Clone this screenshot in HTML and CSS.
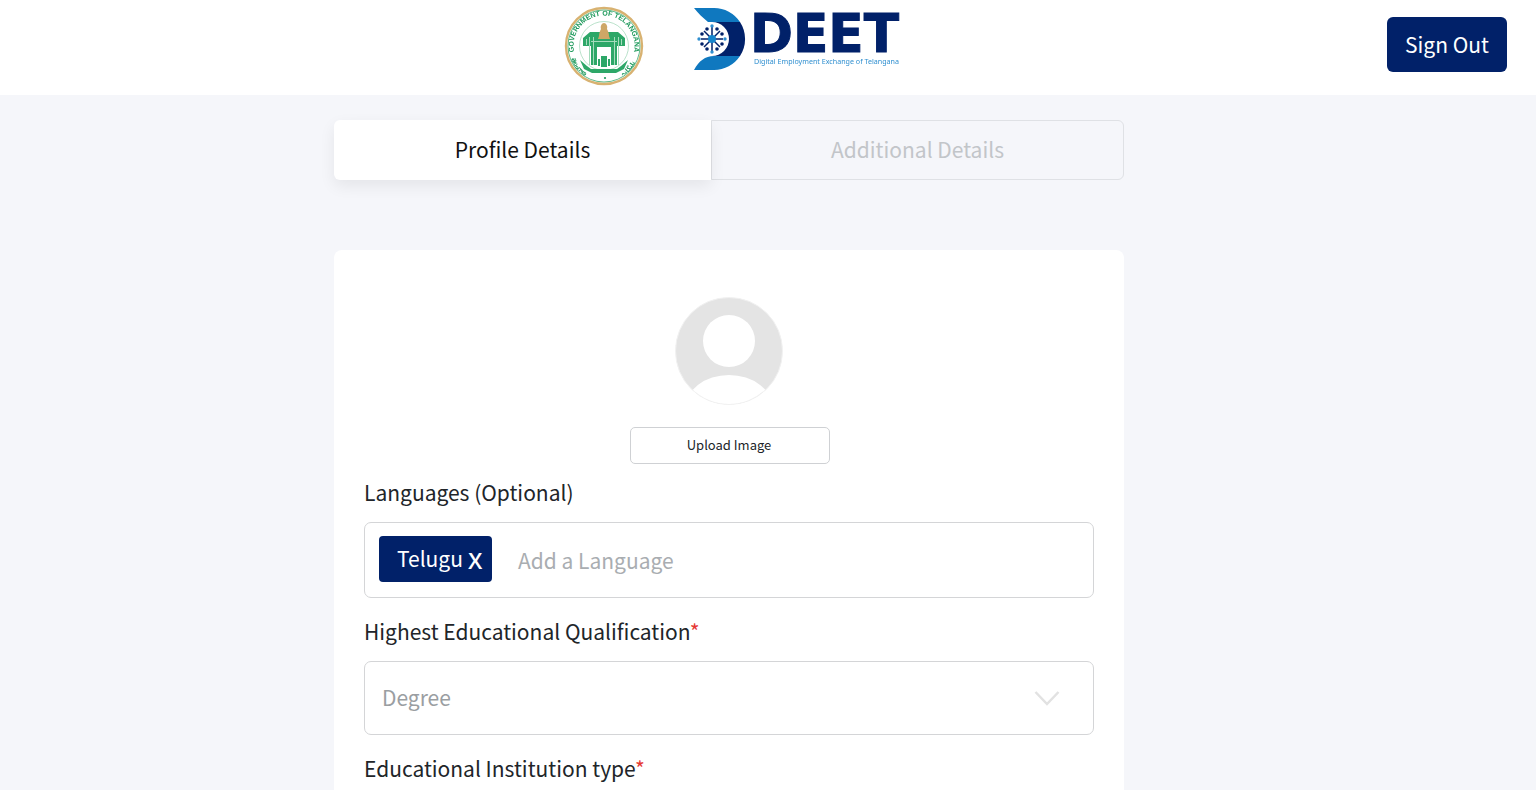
FILE: index.html
```html
<!DOCTYPE html>
<html lang="en">
<head>
<meta charset="utf-8">
<title>DEET Profile</title>
<link rel="stylesheet" href="styles.css">
</head>
<body>
<header class="topbar">
  <svg class="emblem" viewBox="0 0 80 80" width="80" height="80" role="img" aria-label="Government of Telangana emblem">
    <defs>
      <path id="arcTop" d="M40 70.500a30.500 30.500 0 0 1 0-61a30.500 30.500 0 0 1 0 61"/>
      <path id="arcBot" d="M40 4.500a35.500 35.500 0 0 0 0 71a35.500 35.500 0 0 0 0-71"/>
    </defs>
    <circle cx="40" cy="40" r="38" fill="#fff" stroke="#d8b271" stroke-width="2.400"/>
    <circle cx="40" cy="40" r="36" fill="none" stroke="#39a86c" stroke-width=".8"/>
    <text class="emblem-text"><textPath href="#arcTop" startOffset="50%" text-anchor="middle">GOVERNMENT OF TELANGANA</textPath></text>
    <text class="emblem-small"><textPath href="#arcBot" startOffset="36%" text-anchor="middle">తెలంగాణ</textPath></text>
    <text class="emblem-small"><textPath href="#arcBot" startOffset="63%" text-anchor="middle">تلنگانہ</textPath></text>
    <circle cx="40" cy="40" r="24.500" fill="#fff" stroke="#8ccfa8" stroke-width=".6"/>
    <path fill="#2da768" d="M19 32l7-6h28l7 6v8H53v19H27V40H19z"/>
    <path fill="#a5dcbc" d="M22 33h1v6h-1zM25 31h1v28h-1zM29 31h1v28h-1zM50 31h1v28h-1zM54 31h1v28h-1zM57 33h1v6h-1zM27 35h26v1H27z"/>
    <rect x="33" y="39" width="14" height="20" fill="#fff"/>
    <path fill="#2da768" d="M33 39h14v2H33zM37 50h6v11h-6zM34 53h2v7h-2zM44 53h2v7h-2z"/>
    <path fill="#cda766" d="M35 30c0-3 1-5 2-7-1-3 1-6 3-6s4 3 3 6c1 2 2 4 2 7l1 3H34z"/>
    <path fill="#2da768" d="M16 54l7 6 4 3h26l4-3 7-6-4 9-8 4H28l-8-4z"/>
    <circle cx="41" cy="72" r="1.100" fill="#1f9a5c"/>
  </svg>
  <svg class="logo" viewBox="0 0 215 72" width="215" height="72" role="img" aria-label="DEET">
    <g transform="translate(0 8)">
      <path fill="#0f78bf" d="M0 0H20A31 31 0 0 1 46 14H14C9 10 4 5 0 0Z"/>
      <path fill="#012169" d="M18 14H46A31 31 0 0 1 46 48H18A17 17 0 0 0 18 14Z"/>
      <path fill="#0f78bf" d="M0 62H20A31 31 0 0 0 46 48H20C11 48 5 53 0 62Z"/>
      <g class="flake"><path d="M18 19V43M7 31H29M10 23l16 16M26 23L10 39"/></g>
      <g fill="#012169">
        <circle cx="13" cy="21" r="1.800"/><circle cx="23" cy="21" r="1.800"/><circle cx="13" cy="41" r="1.800"/><circle cx="23" cy="41" r="1.800"/>
        <circle cx="8" cy="26" r="1.800"/><circle cx="28" cy="26" r="1.800"/><circle cx="8" cy="36" r="1.800"/><circle cx="28" cy="36" r="1.800"/>
      </g>
      <g fill="#2f8fd0"><circle cx="18" cy="18" r="1.700"/><circle cx="18" cy="44" r="1.700"/><circle cx="5" cy="31" r="1.700"/><circle cx="31" cy="31" r="1.700"/></g>
      <circle cx="18" cy="31" r="4" fill="#1585cc"/>
    </g>
    <text class="logo-word" x="56" y="52" textLength="149" lengthAdjust="spacingAndGlyphs">DEET</text>
    <text class="logo-tag" x="60" y="64" textLength="145" lengthAdjust="spacingAndGlyphs">Digital Employment Exchange of Telangana</text>
  </svg>
  <button class="signout" type="button">Sign Out</button>
</header>

<main class="page">
  <nav class="tabs">
    <div class="tab tab-active">Profile Details</div>
    <div class="tab tab-idle">Additional Details</div>
  </nav>

  <section class="card">
    <div class="avatar-block">
      <svg class="avatar" viewBox="0 0 108 108" width="108" height="108" role="img" aria-label="Profile placeholder">
        <defs><clipPath id="avatarClip"><circle cx="54" cy="54" r="53"/></clipPath></defs>
        <circle cx="54" cy="54" r="53.500" fill="#e4e4e4" stroke="#f1f1f1"/>
        <g clip-path="url(#avatarClip)">
          <circle cx="54" cy="44" r="26" fill="#fff"/>
          <ellipse cx="54" cy="112" rx="44" ry="34" fill="#fff"/>
        </g>
      </svg>
      <button class="upload" type="button">Upload Image</button>
    </div>

    <label class="field-label">Languages (Optional)</label>
    <div class="tag-input">
      <span class="chip">Telugu <span class="chip-x">x</span></span>
      <span class="placeholder">Add a Language</span>
    </div>

    <label class="field-label field-gap">Highest Educational Qualification<span class="req">*</span></label>
    <div class="select">
      <span class="select-value">Degree</span>
      <svg class="chevron" viewBox="0 0 26 16" width="26" height="16" aria-hidden="true"><path d="M1.500 2L13 14 24.500 2"/></svg>
    </div>

    <label class="field-label field-gap">Educational Institution type<span class="req">*</span></label>
  </section>
</main>
</body>
</html>
```
FILE: styles.css
```css
* { box-sizing: border-box; }
html, body { height: 790px; overflow: hidden; }
body {
  margin: 0;
  background: #f5f6fa;
  color: #212529;
  font-family: "Noto Sans CJK SC", "Noto Sans CJK JP", "Noto Sans", sans-serif;
  font-size: 21px;
}
button { font-family: inherit; cursor: pointer; }

.topbar {
  height: 95px;
  background: #fff;
  display: flex;
  align-items: flex-start;
  padding-left: 564px;
  padding-right: 29px;
}
.emblem { margin-top: 6px; flex: none; filter: blur(.45px); }
.logo { margin: 0 0 0 50px; flex: none; filter: blur(.35px); }
.emblem-text { font: 700 7px "Liberation Sans", sans-serif; fill: #1f9a5c; }
.emblem-small { font: 700 6px "DejaVu Sans", sans-serif; fill: #1f9a5c; }
.flake { fill: none; stroke: #012169; stroke-width: 1.500; }
.logo-word { font: 700 54px "DejaVu Sans", sans-serif; fill: #012169; stroke: #012169; stroke-width: 1px; }
.logo-tag { font: 400 7px "Noto Sans", sans-serif; fill: #2f8fd0; }
.signout {
  margin: 17px 0 0 auto;
  width: 120px;
  height: 55px;
  border: 0;
  border-radius: 6px;
  background: #012169;
  color: #fff;
  font-size: 21px;
  padding: 0;
  line-height: 55px;
}

.page {
  width: 790px;
  margin-left: 334px;
  padding-top: 25px;
}
.tabs { display: flex; height: 60px; }
.tab {
  display: flex;
  align-items: center;
  justify-content: center;
  padding-bottom: 2px;
  line-height: 34px;
}
.tab-active {
  width: 377px;
  background: #fff;
  color: #111;
  border-radius: 6px 0 0 6px;
  box-shadow: 0 6px 16px rgba(0, 0, 0, .07);
  position: relative;
}
.tab-idle {
  flex: 1;
  color: #c2c5c9;
  background: #f5f6fa;
  border: 1px solid #dfe1e5;
  border-radius: 0 6px 6px 0;
}

.card {
  margin-top: 70px;
  background: #fff;
  border-radius: 8px 8px 0 0;
  padding: 47px 30px 0;
  height: 600px;
}
.avatar-block { display: flex; flex-direction: column; align-items: center; }
.avatar { display: block; }
.upload {
  margin: 22px 0 0 2px;
  width: 200px;
  height: 37px;
  padding: 0 2px 2px 0;
  background: #fff;
  border: 1px solid #cfd1d4;
  border-radius: 5px;
  color: #212529;
  font-size: 13px;
  line-height: 33px;
}
.field-label { display: block; line-height: 34px; color: #212529; }
.avatar-block + .field-label { margin-top: 11px; }
.field-gap { margin-top: 16px; }
.req { color: #e53935; }
.tag-input {
  margin-top: 13px;
  height: 76px;
  border: 1px solid #d4d5d7;
  border-radius: 7px;
  display: flex;
  align-items: center;
  padding-left: 14px;
}
.chip {
  width: 113px;
  height: 46px;
  margin-top: -3px;
  padding-left: 18px;
  background: #012169;
  color: #fff;
  border-radius: 4px;
  line-height: 44px;
  white-space: nowrap;
}
.chip-x { font-size: 30px; line-height: 30px; vertical-align: -2px; }
.placeholder { margin-left: 26px; color: #a9adb1; line-height: 34px; }
.select {
  margin-top: 13px;
  height: 74px;
  border: 1px solid #d4d5d7;
  border-radius: 7px;
  display: flex;
  align-items: center;
  justify-content: space-between;
  padding: 0 33px 0 17px;
}
.select-value { color: #9a9ea2; line-height: 34px; padding-bottom: 2px; }
.chevron { fill: none; stroke: #e2e2e2; stroke-width: 2.500; }
```
